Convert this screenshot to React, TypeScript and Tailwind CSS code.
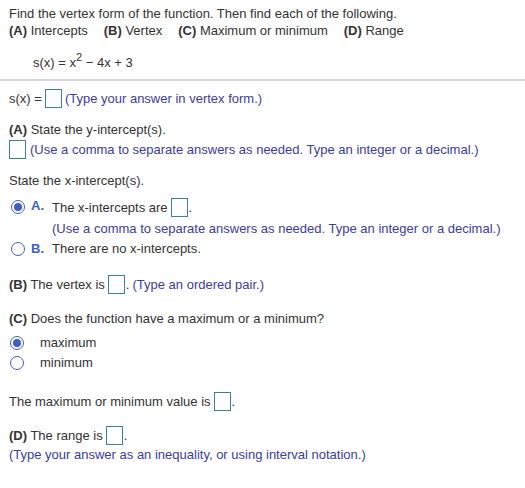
import React from 'react';

const Box: React.FC = () => (
  <span className="inline-block w-[17px] h-[19px] border border-[#3a8585] align-middle bg-white" />
);

const Radio: React.FC<{ checked?: boolean }> = ({ checked }) => (
  <span className="inline-flex items-center justify-center w-[14px] h-[14px] rounded-full border border-[#3f5fc2] bg-white">
    {checked && <span className="w-[8px] h-[8px] rounded-full bg-[#3f5fc2]" />}
  </span>
);

const Hint: React.FC<{ children: React.ReactNode }> = ({ children }) => (
  <span className="text-[#3c3c9c]">{children}</span>
);

export default function App() {
  return (
    <div className="w-[525px] h-[488px] bg-white text-[#333] text-[13px] leading-[16px] font-['Liberation_Sans',Arial,sans-serif]">
      <div className="px-[9px] pt-[6px]">
        <p>Find the vertex form of the function. Then find each of the following.</p>
        <p className="mt-[1px] flex gap-[16px]">
          <span><b>(A)</b> Intercepts</span>
          <span><b>(B)</b> Vertex</span>
          <span><b>(C)</b> Maximum or minimum</span>
          <span><b>(D)</b> Range</span>
        </p>
        <p className="pl-[24px] mt-[16px]">
          s(x) = x<span className="text-[11px] relative -top-[6px]">2</span> − 4x + 3
        </p>
      </div>
      <div className="mt-[8px] border-t-2 border-[#d6d6de]" />
      <div className="px-[9px]">
        <p className="mt-[8px] flex items-center gap-[3px]">
          <span>s(x) =</span>
          <Box />
          <Hint>(Type your answer in vertex form.)</Hint>
        </p>
        <p className="mt-[14px]"><b>(A)</b> State the y-intercept(s).</p>
        <p className="mt-[2px] flex items-center gap-[4px]">
          <Box />
          <Hint>(Use a comma to separate answers as needed. Type an integer or a decimal.)</Hint>
        </p>
        <p className="mt-[14px]">State the x-intercept(s).</p>
        <div className="mt-[9px] flex items-start">
          <div className="w-[22px] pt-[2px] flex justify-start pl-[2px]"><Radio checked /></div>
          <b className="w-[21px] text-[#3f5fc2]">A.</b>
          <div>
            <p className="flex items-center gap-[3px]">The x-intercepts are <Box /><span className="-ml-[2px]">.</span></p>
            <p className="mt-[4px]"><Hint>(Use a comma to separate answers as needed. Type an integer or a decimal.)</Hint></p>
          </div>
        </div>
        <div className="mt-[4px] flex items-start">
          <div className="w-[22px] pt-[1px] flex justify-start pl-[2px]"><Radio /></div>
          <b className="w-[21px] text-[#3f5fc2]">B.</b>
          <p>There are no x-intercepts.</p>
        </div>
        <p className="mt-[18px] flex items-center gap-[3px]">
          <span><b>(B)</b> The vertex is</span> <Box /><span className="-ml-[2px]">.</span> <Hint>(Type an ordered pair.)</Hint>
        </p>
        <p className="mt-[17px]"><b>(C)</b> Does the function have a maximum or a minimum?</p>
        <div className="mt-[8px] flex items-center">
          <div className="w-[31px] pl-[1px] flex"><Radio checked /></div>
          <span>maximum</span>
        </div>
        <div className="mt-[4px] flex items-center">
          <div className="w-[31px] pl-[1px] flex"><Radio /></div>
          <span>minimum</span>
        </div>
        <p className="mt-[21px] flex items-center gap-[3px]">The maximum or minimum value is <Box /><span className="-ml-[2px]">.</span></p>
        <p className="mt-[15px] flex items-center gap-[3px]"><span><b>(D)</b> The range is</span> <Box /><span className="-ml-[2px]">.</span></p>
        <p className="mt-[2px]"><Hint>(Type your answer as an inequality, or using interval notation.)</Hint></p>
      </div>
    </div>
  );
}
